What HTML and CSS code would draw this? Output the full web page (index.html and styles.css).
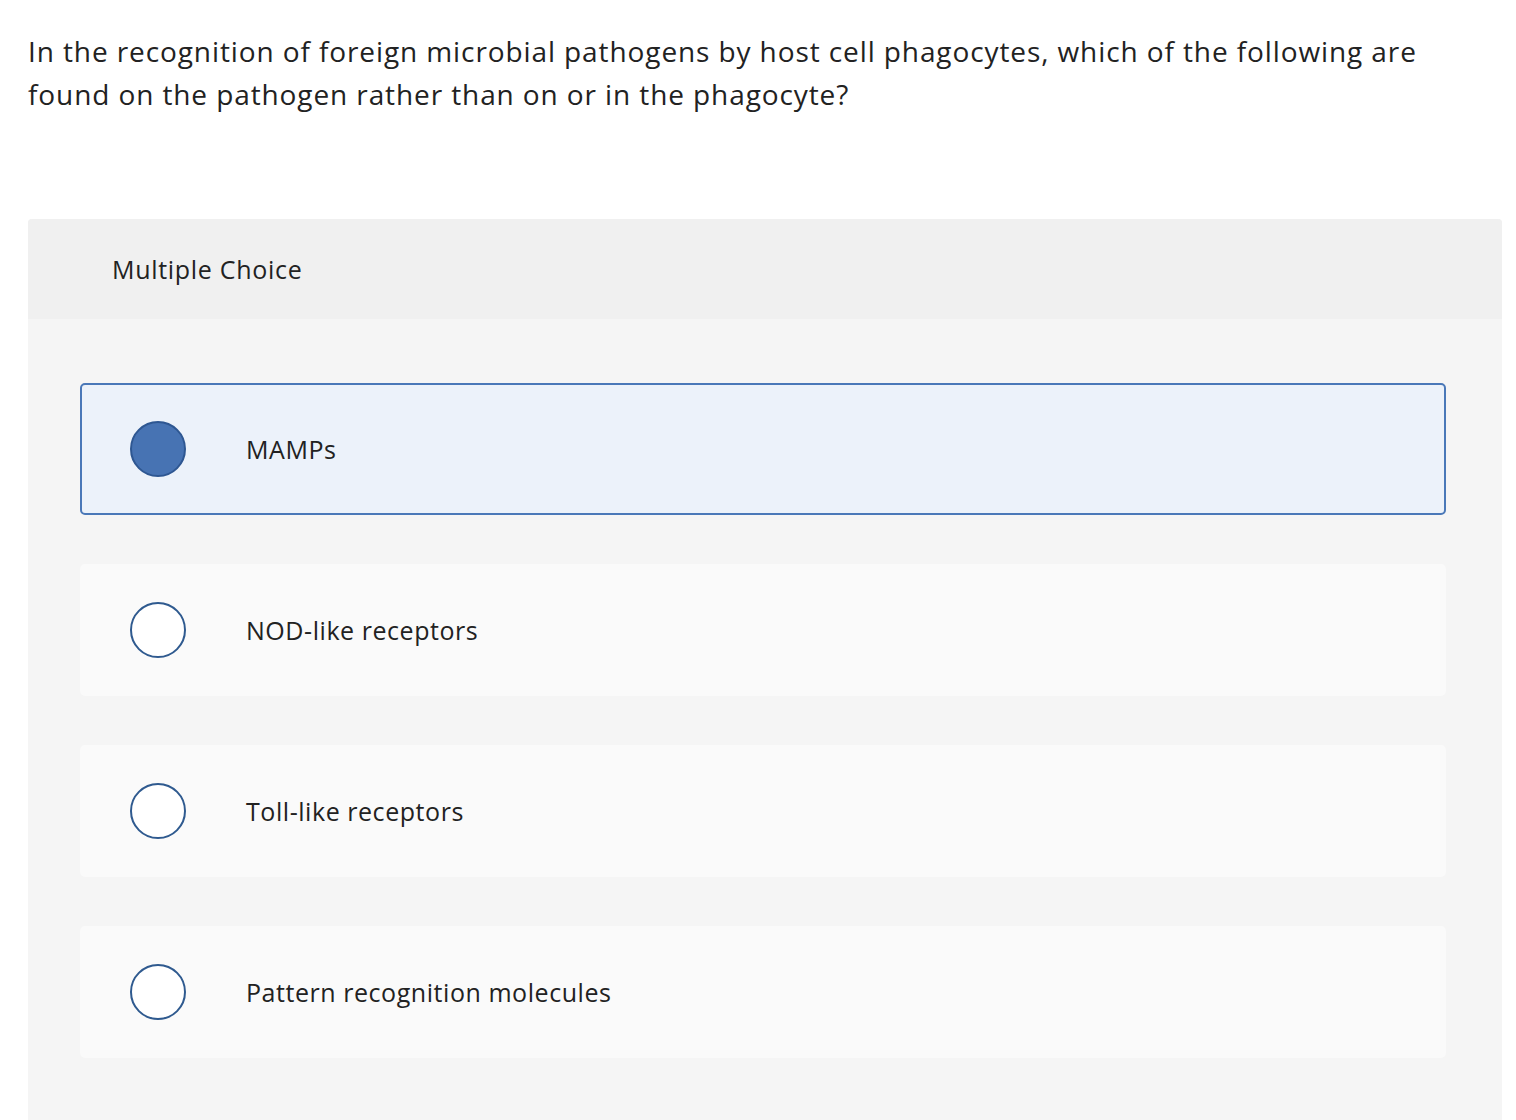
FILE: index.html
```html
<!DOCTYPE html>
<html lang="en">
<head>
  <meta charset="UTF-8" />
  <title>Question</title>
  <link rel="stylesheet" href="styles.css">
</head>
<body>
  <div class="question">
    <p class="prompt">In the recognition of foreign microbial pathogens by host cell phagocytes, which of the following are found on the pathogen rather than on or in the phagocyte?</p>

    <div class="choice-box">
      <div class="choice-head">Multiple Choice</div>
      <div class="choice-list">
        <label class="option selected">
          <span class="radio"></span>
          <span class="option-text">MAMPs</span>
        </label>
        <label class="option">
          <span class="radio"></span>
          <span class="option-text">NOD-like receptors</span>
        </label>
        <label class="option">
          <span class="radio"></span>
          <span class="option-text">Toll-like receptors</span>
        </label>
        <label class="option">
          <span class="radio"></span>
          <span class="option-text">Pattern recognition molecules</span>
        </label>
      </div>
    </div>
  </div>
</body>
</html>
```

FILE: styles.css
```css
body {
  margin: 0;
  background: #fff;
  font-family: "Open Sans", Arial, sans-serif;
  color: #222;
}
.question {
  padding: 30px 14px 0 28px;
}
.prompt {
  margin: 0 0 103px;
  font-size: 28px;
  line-height: 43px;
  letter-spacing: 0.9px;
  max-width: 1440px;
}
.choice-box {
  background: #f5f5f5;
  border-radius: 4px 4px 0 0;
  padding-bottom: 80px;
}
.choice-head {
  background: #f0f0f0;
  border-radius: 4px 4px 0 0;
  height: 100px;
  display: flex;
  align-items: center;
  padding-left: 84px;
  font-size: 25px;
  letter-spacing: 0.7px;
}
.choice-list {
  display: flex;
  flex-direction: column;
  gap: 49px;
  padding: 64px 56px 0 52px;
}
.option {
  display: flex;
  align-items: center;
  height: 132px;
  box-sizing: border-box;
  padding-left: 48px;
  background: #fafafa;
  border: 2px solid transparent;
  border-radius: 5px;
  cursor: pointer;
}
.option.selected {
  background: #ecf2fa;
  border-color: #4a78b8;
}
.radio {
  width: 56px;
  height: 56px;
  box-sizing: border-box;
  border: 2px solid #2f5a8f;
  border-radius: 50%;
  background: #fff;
  flex: none;
}
.option.selected .radio {
  background: #4773b3;
  border-color: #2e5792;
}
.option-text {
  margin-left: 60px;
  font-size: 25px;
  letter-spacing: 0.55px;
}
```
